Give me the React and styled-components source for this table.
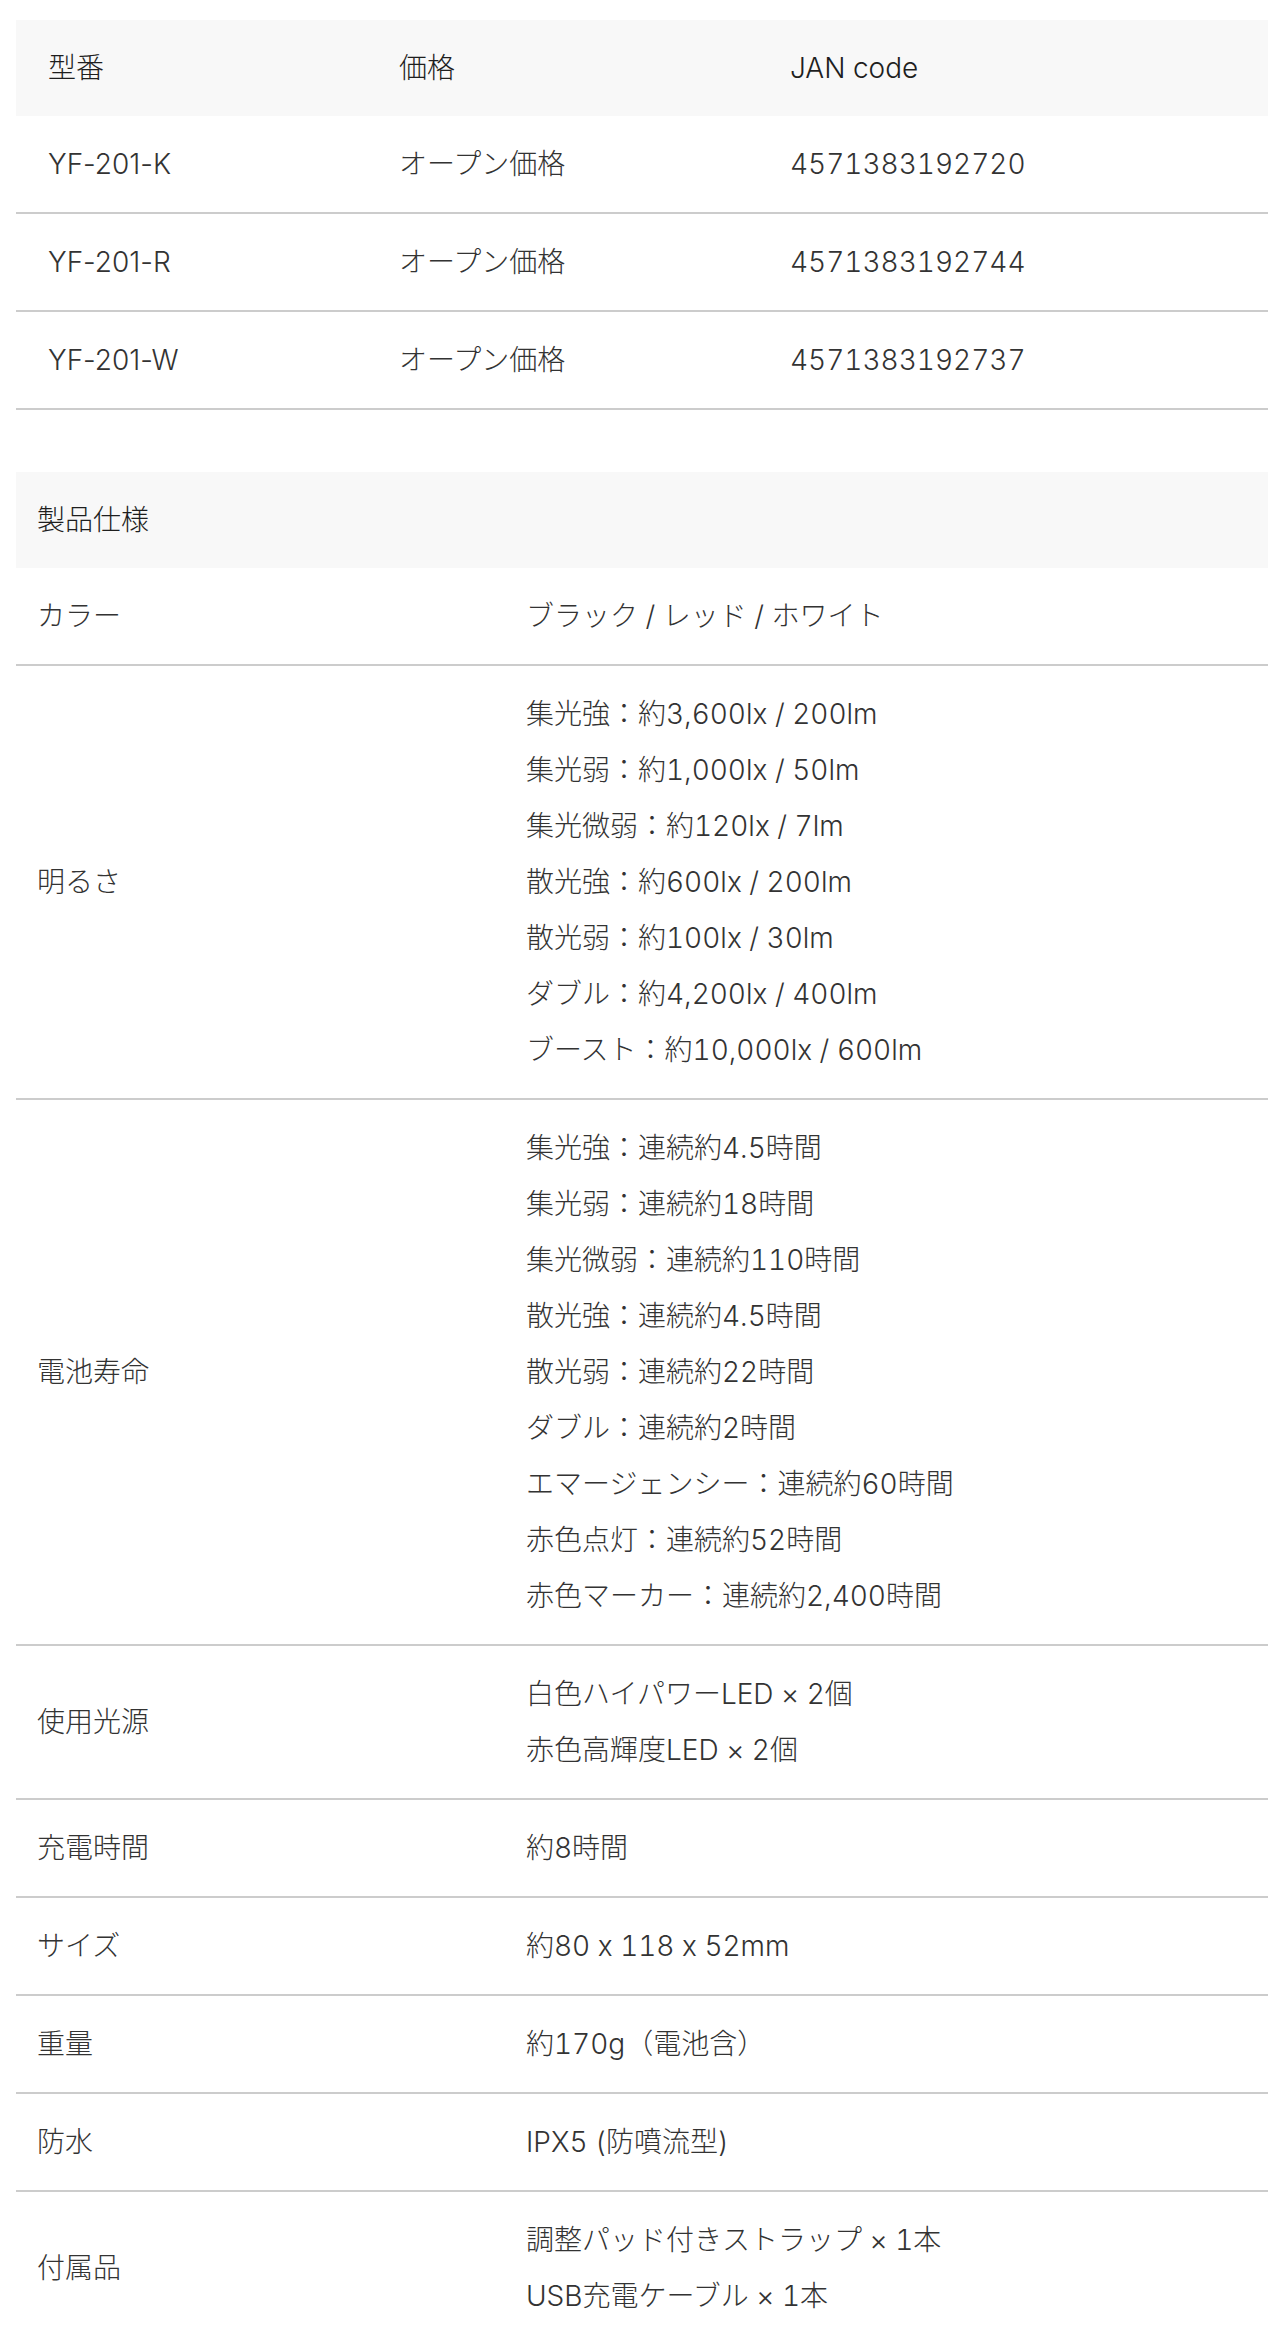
import styled, { createGlobalStyle } from "styled-components";

const GlobalStyle = createGlobalStyle`
  html, body {
    margin: 0;
    padding: 0;
    background: #fff;
  }
  body {
    font-family: "Inter", "Noto Sans CJK JP", sans-serif;
    font-weight: 300;
    font-feature-settings: "calt" 0, "tnum" 1;
    color: #333;
  }
`;

const Page = styled.div`
  padding: 20px 0 0 16px;
`;

const ModelTable = styled.div`
  margin-bottom: 62px;
`;

const ModelRow = styled.div`
  display: grid;
  grid-template-columns: 351px 391px 1fr;
  background: ${(p) => (p.$head ? "#f8f8f8" : "transparent")};
  border-bottom: ${(p) => (p.$head ? "none" : "2px solid #cccccc")};
`;

const ModelCell = styled.div`
  padding: 20px 32px;
  font-size: 28px;
  line-height: 56px;
  color: ${(p) => (p.$head ? "#1e1e1e" : "#333")};
  font-feature-settings: ${(p) => (p.$proportional ? '"calt" 0' : '"calt" 0, "tnum" 1')};
`;

const SpecTable = styled.div``;

const SpecHead = styled.div`
  background: #f8f8f8;
  padding: 20px 21px;
  font-size: 28px;
  line-height: 56px;
  color: #1e1e1e;
`;

const SpecRow = styled.div`
  display: grid;
  grid-template-columns: 489px 1fr;
  border-bottom: 2px solid #cccccc;
`;

const SpecLabel = styled.div`
  display: flex;
  align-items: center;
  padding: 20px 21px;
  font-size: 28px;
  line-height: 56px;
  color: #333;
`;

const SpecValue = styled.div`
  padding: 20px 21px;
  font-size: 28px;
  line-height: 56px;
  color: #333;
`;

const Line = styled.div`
  white-space: nowrap;
`;

const models = [
  ["YF-201-K", "オープン価格", "4571383192720"],
  ["YF-201-R", "オープン価格", "4571383192744"],
  ["YF-201-W", "オープン価格", "4571383192737"],
];

const specs = [
  ["カラー", ["ブラック / レッド / ホワイト"]],
  [
    "明るさ",
    [
      "集光強：約3,600lx / 200lm",
      "集光弱：約1,000lx / 50lm",
      "集光微弱：約120lx / 7lm",
      "散光強：約600lx / 200lm",
      "散光弱：約100lx / 30lm",
      "ダブル：約4,200lx / 400lm",
      "ブースト：約10,000lx / 600lm",
    ],
  ],
  [
    "電池寿命",
    [
      "集光強：連続約4.5時間",
      "集光弱：連続約18時間",
      "集光微弱：連続約110時間",
      "散光強：連続約4.5時間",
      "散光弱：連続約22時間",
      "ダブル：連続約2時間",
      "エマージェンシー：連続約60時間",
      "赤色点灯：連続約52時間",
      "赤色マーカー：連続約2,400時間",
    ],
  ],
  ["使用光源", ["白色ハイパワーLED × 2個", "赤色高輝度LED × 2個"]],
  ["充電時間", ["約8時間"]],
  ["サイズ", ["約80 x 118 x 52mm"]],
  ["重量", ["約170g（電池含）"]],
  ["防水", ["IPX5 (防噴流型)"]],
  ["付属品", ["調整パッド付きストラップ × 1本", "USB充電ケーブル × 1本"]],
];

export default function App() {
  return (
    <Page>
      <GlobalStyle />
      <ModelTable>
        <ModelRow $head>
          <ModelCell $head>型番</ModelCell>
          <ModelCell $head>価格</ModelCell>
          <ModelCell $head>JAN code</ModelCell>
        </ModelRow>
        {models.map((m) => (
          <ModelRow key={m[0]}>
            {m.map((v, i) => (
              <ModelCell key={i} $proportional={i === 0}>
                {v}
              </ModelCell>
            ))}
          </ModelRow>
        ))}
      </ModelTable>

      <SpecTable>
        <SpecHead>製品仕様</SpecHead>
        {specs.map(([label, lines]) => (
          <SpecRow key={label}>
            <SpecLabel>{label}</SpecLabel>
            <SpecValue>
              {lines.map((l) => (
                <Line key={l}>{l}</Line>
              ))}
            </SpecValue>
          </SpecRow>
        ))}
      </SpecTable>
    </Page>
  );
}
